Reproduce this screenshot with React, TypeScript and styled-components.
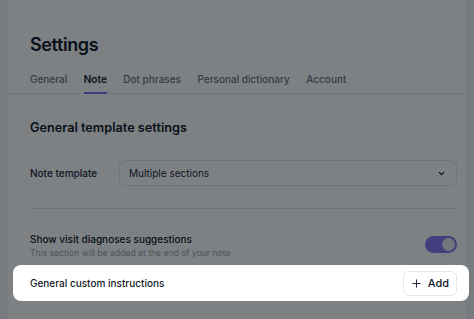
import React from "react";
import styled, { createGlobalStyle } from "styled-components";

const Global = createGlobalStyle`
  html, body { margin: 0; padding: 0; background: #ffffff; }
  body { font-family: Inter, "Noto Sans", "Liberation Sans", sans-serif; -webkit-font-smoothing: antialiased; }
`;

const Viewport = styled.div`
  position: relative;
  width: 474px;
  height: 319px;
  overflow: hidden;
  background: #f4f5f7;
`;

const Card = styled.div`
  margin: 0 8px;
  height: 100%;
  background: #ffffff;
  padding: 32px 9px 0 22px;
  box-sizing: border-box;
`;

const Title = styled.h1`
  margin: 0;
  font-size: 18px;
  line-height: 26px;
  font-weight: 600;
  color: #111827;
  letter-spacing: -0.4px;
`;

const Tabs = styled.div`
  display: flex;
  gap: 16.5px;
  margin: 7px -9px 0 -22px;
  padding: 0 0 0 22px;
  border-bottom: 1px solid #e5e7eb;
`;

const Tab = styled.div<{ $active?: boolean }>`
  font-size: 10px;
  line-height: 14px;
  padding: 7px 0 6px;
  font-weight: ${(p) => (p.$active ? 600 : 500)};
  color: ${(p) => (p.$active ? "#111827" : "#6b7280")};
  border-bottom: 2px solid ${(p) => (p.$active ? "#7c6ff0" : "transparent")};
  margin-bottom: -1px;
`;

const SectionTitle = styled.h2`
  margin: 25px 0 0;
  font-size: 12.7px;
  line-height: 18px;
  font-weight: 600;
  color: #111827;
`;

const FieldRow = styled.div`
  display: flex;
  align-items: center;
  margin-top: 23px;
`;

const Label = styled.div`
  width: 89px;
  font-size: 10px;
  font-weight: 500;
  color: #1f2937;
`;

const Select = styled.div`
  flex: 1;
  height: 26px;
  box-sizing: border-box;
  border: 1px solid #e5e7eb;
  border-radius: 6px;
  display: flex;
  align-items: center;
  justify-content: space-between;
  padding: 0 10px 0 9px;
  font-size: 10px;
  color: #1f2937;
`;

const Divider = styled.div`
  height: 1px;
  background: #e5e7eb;
  margin-top: 22px;
`;

const ToggleRow = styled.div`
  display: flex;
  align-items: center;
  justify-content: space-between;
  margin-top: 23px;
`;

const TextCol = styled.div`
  display: flex;
  flex-direction: column;
  gap: 1px;
`;

const RowTitle = styled.div`
  font-size: 10px;
  line-height: 14px;
  font-weight: 500;
  color: #111827;
`;

const RowSub = styled.div`
  font-size: 8.6px;
  line-height: 13px;
  color: #9ca3af;
`;

const Switch = styled.div`
  width: 32px;
  height: 17px;
  border-radius: 9px;
  background: #8a78f5;
  position: relative;
  margin-bottom: 4px;
  &::after {
    content: "";
    position: absolute;
    right: 2px;
    top: 2px;
    width: 13px;
    height: 13px;
    border-radius: 50%;
    background: #e9e9ec;
  }
`;

const Overlay = styled.div`
  position: absolute;
  inset: 0;
  background: rgba(0, 8, 14, 0.51);
  z-index: 1;
`;

const Spotlight = styled.div`
  position: relative;
  z-index: 2;
  margin: 5px -12px 0 -17px;
  padding: 0 12px 0 17px;
  height: 36px;
  background: #ffffff;
  border-radius: 8px;
  display: flex;
  align-items: center;
  justify-content: space-between;
`;

const AddButton = styled.button`
  display: flex;
  align-items: center;
  gap: 6px;
  height: 25px;
  width: 54px;
  box-sizing: border-box;
  justify-content: center;
  border: 1px solid #e5e7eb;
  border-radius: 6px;
  background: #ffffff;
  font-family: inherit;
  font-size: 11px;
  font-weight: 500;
  color: #111827;
  padding: 0;
`;

export default function App() {
  return (
    <>
      <Global />
      <Viewport>
        <Card>
          <Title>Settings</Title>
          <Tabs>
            <Tab>General</Tab>
            <Tab $active>Note</Tab>
            <Tab>Dot phrases</Tab>
            <Tab>Personal dictionary</Tab>
            <Tab>Account</Tab>
          </Tabs>
          <SectionTitle>General template settings</SectionTitle>
          <FieldRow>
            <Label>Note template</Label>
            <Select>
              <span>Multiple sections</span>
              <svg width="9" height="9" viewBox="0 0 24 24" fill="none" stroke="#111827" strokeWidth="3" strokeLinecap="round" strokeLinejoin="round">
                <path d="M6 9l6 6 6-6" />
              </svg>
            </Select>
          </FieldRow>
          <Divider />
          <ToggleRow>
            <TextCol>
              <RowTitle>Show visit diagnoses suggestions</RowTitle>
              <RowSub>This section will be added at the end of your note</RowSub>
            </TextCol>
            <Switch />
          </ToggleRow>
          <Spotlight>
            <RowTitle>General custom instructions</RowTitle>
            <AddButton>
              <svg width="11" height="11" viewBox="0 0 24 24" fill="none" stroke="#111827" strokeWidth="2" strokeLinecap="round">
                <path d="M12 4v16M4 12h16" />
              </svg>
              Add
            </AddButton>
          </Spotlight>
        </Card>
        <Overlay />
      </Viewport>
    </>
  );
}
